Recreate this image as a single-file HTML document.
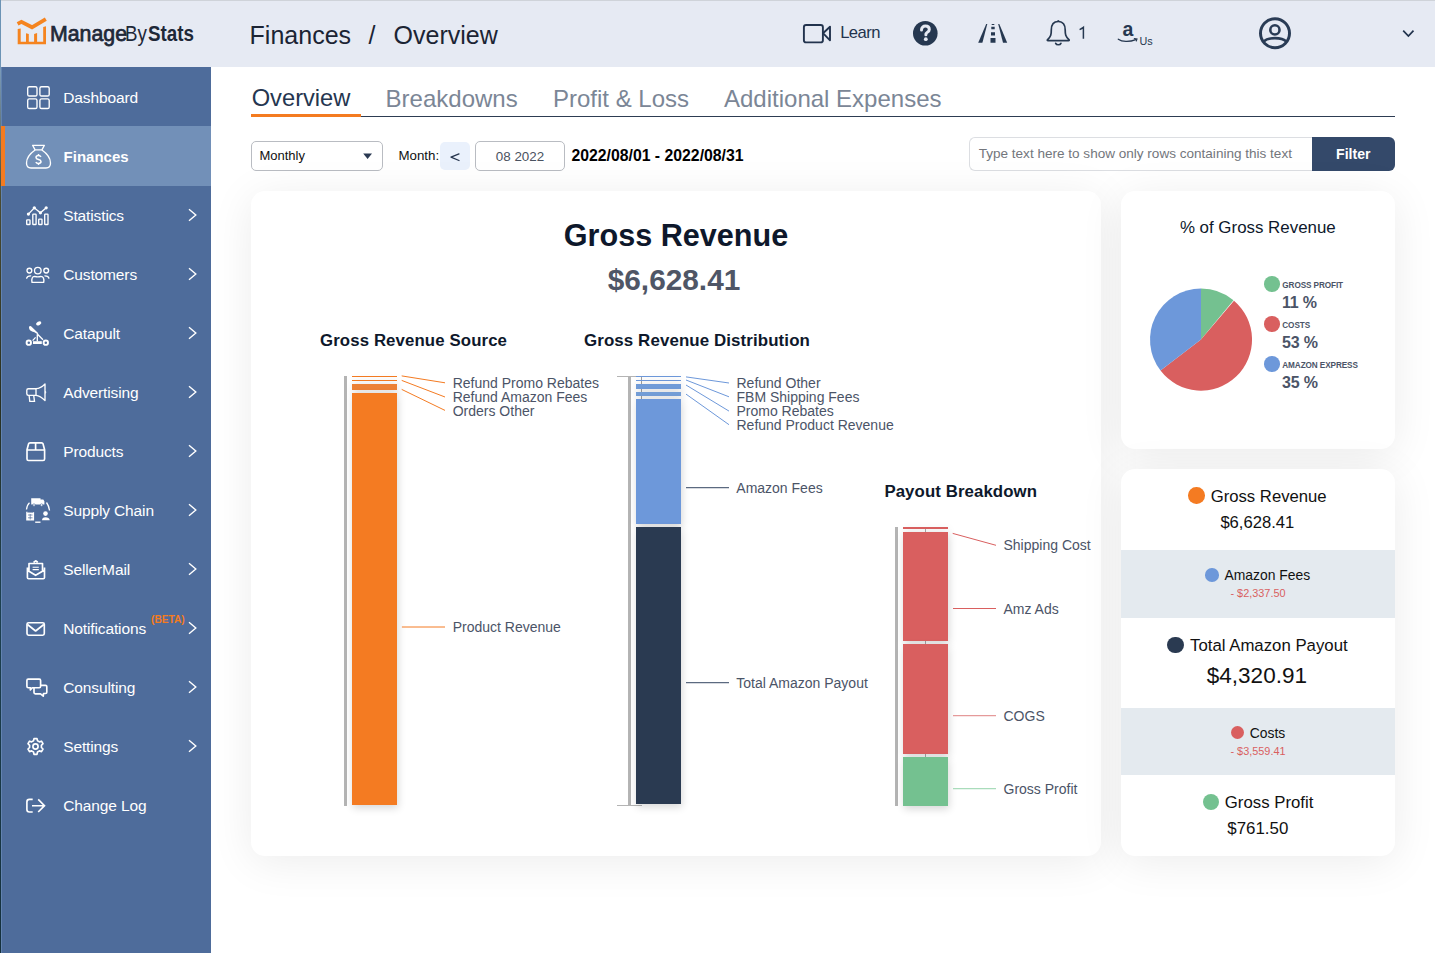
<!DOCTYPE html>
<html><head><meta charset="utf-8"><style>
*{box-sizing:border-box;margin:0;padding:0}
html,body{width:1435px;height:953px;overflow:hidden;background:#fff;font-family:"Liberation Sans",sans-serif;position:relative}
.t{position:absolute;white-space:nowrap}
.abs{position:absolute}
.card{position:absolute;background:#fff;border-radius:14px;box-shadow:0 6px 44px rgba(0,0,0,0.08)}
</style></head><body>
<div class="abs" style="left:0;top:0;width:1435px;height:67px;background:#e6eaf3;border-top:1px solid #cfd3d9"></div><div class="abs" style="left:0;top:0;width:1px;height:953px;background:linear-gradient(#6b93b5 0,#6b93b5 60px,#7a9ab8 70px,#4a4a30 200px,#2a3020 400px,#1d4050 600px,#15303c 953px);z-index:9"></div><div class="abs" style="left:1px;top:67px;width:1px;height:886px;background:#6283b0;z-index:9"></div><svg class="abs" style="left:12px;top:14px" width="40" height="36" viewBox="0 0 40 36">
<polyline points="5.6,9.9 9.4,7.9 20,13.3 33.8,5.2" fill="none" stroke="#f5841f" stroke-width="3.8" stroke-linejoin="miter"/>
<path d="M5.7 15 L8.7 14.4 V27.8 H14 V19.3 L16.8 19.9 V27.8 H22.1 V19.9 L25.1 19.1 V27.8 H31.2 V13 L34 12.3 V30.2 H5.7 Z" fill="#f5841f"/>
</svg><div class="t" style="left:50.3px;top:22.5px;font-size:22.5px;line-height:22.5px;color:#1e2838;transform-origin:0 0;transform:scale(0.947,1);-webkit-text-stroke:0.75px #1e2838">Manage</div><div class="t" style="left:125.2px;top:22.5px;font-size:22.5px;line-height:22.5px;color:#1e2838;transform-origin:0 0;transform:scale(0.834,1)">By</div><div class="t" style="left:147.8px;top:22.5px;font-size:22.5px;line-height:22.5px;color:#1e2838;transform-origin:0 0;transform:scale(0.835,1);font-weight:700">Stats</div><div class="t" style="top:22.64px;font-size:25px;line-height:25px;color:#1b2434;left:249.60px;">Finances</div>
<div class="t" style="top:22.64px;font-size:25px;line-height:25px;color:#1b2434;left:368.50px;">/</div>
<div class="t" style="top:22.64px;font-size:25px;line-height:25px;color:#1b2434;left:393.60px;">Overview</div>
<svg class="abs" style="left:795px;top:13px" width="100" height="40" viewBox="0 0 100 40">
<rect x="8.9" y="12" width="19" height="17.4" rx="2.2" fill="none" stroke="#22334d" stroke-width="1.9"/>
<path d="M28 20.2 L35 13.7 V27.3 Z" fill="none" stroke="#22334d" stroke-width="1.9" stroke-linejoin="round"/>
</svg><div class="t" style="top:24.85px;font-size:16.6px;line-height:16.6px;color:#22334d;letter-spacing:-0.55px;left:840.20px;">Learn</div>
<svg class="abs" style="left:900px;top:13px" width="40" height="40" viewBox="0 0 40 40">
<circle cx="25.3" cy="20.3" r="12.3" fill="#263850"/>
<path d="M21.5 17 C21.5 14.3 23.3 13.1 25.4 13.1 C27.7 13.1 29.3 14.4 29.3 16.4 C29.3 18.7 26.6 19.1 26 20.8 L25.9 21.8" fill="none" stroke="#e6eaf3" stroke-width="3" stroke-linecap="round"/>
<circle cx="25.8" cy="26.2" r="1.9" fill="#e6eaf3"/>
</svg><svg class="abs" style="left:970px;top:13px" width="45" height="40" viewBox="0 0 45 40">
<path d="M16.2 10.9 L17.3 10.9 L12.4 29.7 L8.2 29.7 Z" fill="#263850"/>
<path d="M28.2 10.9 L29.3 10.9 L37.2 29.7 L33 29.7 Z" fill="#263850"/>
<path d="M21.7 10.9 H24.3 V12.1 H21.7 Z M21.3 13.8 H24.7 V16.3 H21.3 Z M21 19.2 H25 V22.6 H21 Z M20.5 25 H25.5 V29.7 H20.5 Z" fill="#263850"/>
</svg><svg class="abs" style="left:1035px;top:13px" width="40" height="40" viewBox="0 0 40 40">
<path d="M23.3 8.5 C18.3 8.5 16.3 12.5 16.3 17 C16.3 21.5 16 23.5 12.6 26.6 C12 27.2 12.3 27.6 13 27.6 H33.5 C34.2 27.6 34.5 27.2 33.9 26.6 C30.5 23.5 30.2 21.5 30.2 17 C30.2 12.5 28.3 8.5 23.3 8.5 Z" fill="none" stroke="#263850" stroke-width="1.7" stroke-linejoin="round"/>
<path d="M23.3 7.2 V8.5" stroke="#263850" stroke-width="1.7"/>
<path d="M20.7 30.3 C21.5 32.2 25.1 32.2 25.9 30.3" fill="none" stroke="#263850" stroke-width="1.7" stroke-linecap="round"/>
</svg><svg class="abs" style="left:1070px;top:20px" width="20" height="25"><path d="M9.6 9.6 C11 9 12.4 8.2 13.4 7.4 V18.8" fill="none" stroke="#263850" stroke-width="1.5"/></svg><div class="t" style="top:19.79px;font-size:19.5px;line-height:19.5px;color:#263850;font-weight:700;left:1122.40px;">a</div>
<svg class="abs" style="left:1110px;top:30px" width="40" height="16" viewBox="0 0 40 16">
<path d="M8.3 9.2 C12 11.8 19 12.3 25.8 9.6" fill="none" stroke="#263850" stroke-width="1.3" stroke-linecap="round"/>
<path d="M24.3 8.6 L27 9 L26.3 11" fill="none" stroke="#263850" stroke-width="1.1" stroke-linecap="round"/>
</svg><div class="t" style="top:35.56px;font-size:10.8px;line-height:10.8px;color:#263850;left:1139.40px;">Us</div>
<svg class="abs" style="left:1250px;top:10px" width="50" height="48" viewBox="0 0 50 48">
<circle cx="25" cy="23.3" r="14.5" fill="none" stroke="#2a3c55" stroke-width="3"/>
<circle cx="24.9" cy="19.9" r="4.6" fill="none" stroke="#2a3c55" stroke-width="2.6"/>
<path d="M13.2 31.8 C16 29 20 28.1 24.9 28.1 C29.8 28.1 33.8 29 36.6 31.8" fill="none" stroke="#2a3c55" stroke-width="2.6"/>
</svg><svg class="abs" style="left:1395px;top:20px" width="30" height="28" viewBox="0 0 30 28">
<polyline points="8.2,10.6 13.4,16 18.5,10.6" fill="none" stroke="#22334d" stroke-width="1.7"/>
</svg><div class="abs" style="left:0;top:67px;width:211px;height:886px;background:#4e6c9b"></div><div class="abs" style="left:0;top:126px;width:211px;height:60px;background:#7290b8"></div><div class="abs" style="left:1px;top:126px;width:4px;height:60px;background:#f47b20;z-index:10"></div><div class="t" style="top:90.18px;font-size:15.5px;line-height:15.5px;color:#fff;letter-spacing:-0.12px;left:63.20px;">Dashboard</div>
<svg class="abs" style="left:20px;top:80px" width="40" height="40" viewBox="0 0 40 40"><rect x="7.7" y="6.7" width="9.3" height="9.3" rx="1.6" fill="none" stroke="#ffffff" stroke-width="1.35"/><rect x="19.9" y="6.7" width="9.3" height="9.3" rx="1.6" fill="none" stroke="#ffffff" stroke-width="1.35"/><rect x="7.7" y="18.9" width="9.3" height="9.6" rx="1.6" fill="none" stroke="#ffffff" stroke-width="1.35"/><rect x="19.9" y="18.9" width="9.3" height="9.6" rx="1.6" fill="none" stroke="#ffffff" stroke-width="1.35"/></svg><div class="t" style="top:149.00px;font-size:15px;line-height:15px;color:#fff;font-weight:700;left:63.60px;">Finances</div>
<svg class="abs" style="left:20px;top:136px" width="40" height="40" viewBox="0 0 40 40"><path d="M12.6 9.3 H24.4 L21.9 13.9 H15.1 Z" fill="none" stroke="#ffffff" stroke-width="1.35" stroke-linejoin="round"/><path d="M15.1 14 C10 17.5 6.5 22 6.5 27 C6.5 30.5 8.5 32 11 32 H26 C28.5 32 30.5 30.5 30.5 27 C30.5 22 27 17.5 21.9 14" fill="none" stroke="#ffffff" stroke-width="1.35"/><path d="M21 20.8 C20.5 20 19.6 19.6 18.5 19.6 C17 19.6 16 20.4 16 21.5 C16 22.7 17 23.1 18.5 23.5 C20 23.9 21 24.4 21 25.6 C21 26.8 19.9 27.5 18.5 27.5 C17.3 27.5 16.3 27 15.8 26.2 M18.5 18 V19.6 M18.5 27.5 V29" fill="none" stroke="#ffffff" stroke-width="1.5"/></svg><div class="t" style="top:208.18px;font-size:15.5px;line-height:15.5px;color:#fff;letter-spacing:-0.12px;left:63.20px;">Statistics</div>
<svg class="abs" style="left:20px;top:195px" width="40" height="40" viewBox="0 0 40 40"><polyline points="8.4,19.1 14.3,12.8 20.4,17.8 26.2,12.8" fill="none" stroke="#ffffff" stroke-width="1.35"/><circle cx="8.4" cy="19.1" r="1.6" fill="#ffffff"/><circle cx="14.3" cy="12.8" r="1.6" fill="#ffffff"/><circle cx="20.4" cy="17.8" r="1.6" fill="#ffffff"/><circle cx="26.2" cy="12.8" r="1.6" fill="#ffffff"/><rect x="6.7" y="24.9" width="3.3" height="4.6" rx="0.6" fill="none" stroke="#ffffff" stroke-width="1.35"/><rect x="12.8" y="19.1" width="3.3" height="10.4" rx="0.6" fill="none" stroke="#ffffff" stroke-width="1.35"/><rect x="18.7" y="24.1" width="3.3" height="5.4" rx="0.6" fill="none" stroke="#ffffff" stroke-width="1.35"/><rect x="24.7" y="19.1" width="3.3" height="10.4" rx="0.6" fill="none" stroke="#ffffff" stroke-width="1.35"/></svg><svg class="abs" style="left:180px;top:205px" width="24" height="20" viewBox="0 0 24 20"><polyline points="9,4.3 15.8,10 9,15.7" fill="none" stroke="#fff" stroke-width="1.4"/></svg><div class="t" style="top:267.18px;font-size:15.5px;line-height:15.5px;color:#fff;letter-spacing:-0.12px;left:63.20px;">Customers</div>
<svg class="abs" style="left:20px;top:254px" width="40" height="40" viewBox="0 0 40 40"><circle cx="9.4" cy="16.6" r="2.4" fill="none" stroke="#ffffff" stroke-width="1.35"/><circle cx="17.8" cy="16.6" r="3.3" fill="none" stroke="#ffffff" stroke-width="1.35"/><circle cx="26.2" cy="16.6" r="2.4" fill="none" stroke="#ffffff" stroke-width="1.35"/><path d="M12 28.3 C11.3 24.5 12.5 22.4 14.5 22.4 C16.5 23 19 23 21 22.4 C23 22.4 24.4 24.5 23.7 28.3 Z" fill="none" stroke="#ffffff" stroke-width="1.35" stroke-linejoin="round"/><path d="M6.7 24.2 C7 22.5 8.5 21.8 10.7 21.8" fill="none" stroke="#ffffff" stroke-width="1.35" stroke-linecap="round"/><path d="M28.9 24.2 C28.6 22.5 27.1 21.8 24.9 21.8" fill="none" stroke="#ffffff" stroke-width="1.35" stroke-linecap="round"/></svg><svg class="abs" style="left:180px;top:264px" width="24" height="20" viewBox="0 0 24 20"><polyline points="9,4.3 15.8,10 9,15.7" fill="none" stroke="#fff" stroke-width="1.4"/></svg><div class="t" style="top:326.18px;font-size:15.5px;line-height:15.5px;color:#fff;letter-spacing:-0.12px;left:63.20px;">Catapult</div>
<svg class="abs" style="left:20px;top:313px" width="40" height="40" viewBox="0 0 40 40"><circle cx="8.8" cy="29.7" r="2.2" fill="none" stroke="#ffffff" stroke-width="1.9"/><circle cx="25.8" cy="29.7" r="2.2" fill="none" stroke="#ffffff" stroke-width="1.9"/><rect x="13" y="28.2" width="8.8" height="2.8" fill="#ffffff"/><path d="M17.3 28.2 V21.2 M17.3 21 L23 26.8 M12.6 27.6 L15.6 24.4" stroke="#ffffff" stroke-width="1.35"/><path d="M9 13.6 C8.7 16.5 10.5 18.6 14 19 L17.6 21.2 L18.3 20.2 L10.8 13 Z" fill="#ffffff"/><ellipse cx="18.7" cy="10.4" rx="2.8" ry="1.8" transform="rotate(-30 18.7 10.4)" fill="#ffffff"/></svg><svg class="abs" style="left:180px;top:323px" width="24" height="20" viewBox="0 0 24 20"><polyline points="9,4.3 15.8,10 9,15.7" fill="none" stroke="#fff" stroke-width="1.4"/></svg><div class="t" style="top:385.18px;font-size:15.5px;line-height:15.5px;color:#fff;letter-spacing:-0.12px;left:63.20px;">Advertising</div>
<svg class="abs" style="left:20px;top:372px" width="40" height="40" viewBox="0 0 40 40"><path d="M16 16.7 H8.4 C7.3 16.7 6.8 17.3 6.8 18.3 V21.8 C6.8 22.8 7.3 23.3 8.4 23.3 H16 Z" fill="none" stroke="#ffffff" stroke-width="1.35"/><path d="M16 16.7 C19.5 16.5 22.5 14.5 25 12 V28.6 C22.5 26 19.5 23.6 16 23.3" fill="none" stroke="#ffffff" stroke-width="1.35" stroke-linejoin="round"/><path d="M9.1 23.5 L9.8 29.4 H14.5 L13.8 24" fill="none" stroke="#ffffff" stroke-width="1.35"/><path d="M25.2 18.8 C26.6 19.3 26.6 21.3 25.2 21.8" fill="#ffffff"/></svg><svg class="abs" style="left:180px;top:382px" width="24" height="20" viewBox="0 0 24 20"><polyline points="9,4.3 15.8,10 9,15.7" fill="none" stroke="#fff" stroke-width="1.4"/></svg><div class="t" style="top:444.18px;font-size:15.5px;line-height:15.5px;color:#fff;letter-spacing:-0.12px;left:63.20px;">Products</div>
<svg class="abs" style="left:20px;top:431px" width="40" height="40" viewBox="0 0 40 40"><path d="M7 18.7 V28 C7 29 7.6 29.5 8.5 29.5 H23.1 C24 29.5 24.6 29 24.6 28 V18.7 L23 12.7 C22.8 12 22.3 11.8 21.6 11.8 H10 C9.3 11.8 8.8 12 8.6 12.7 Z M7 19 H24.6 M15.6 12 V18.5" fill="none" stroke="#ffffff" stroke-width="1.65" stroke-linejoin="round"/></svg><svg class="abs" style="left:180px;top:441px" width="24" height="20" viewBox="0 0 24 20"><polyline points="9,4.3 15.8,10 9,15.7" fill="none" stroke="#fff" stroke-width="1.4"/></svg><div class="t" style="top:503.18px;font-size:15.5px;line-height:15.5px;color:#fff;letter-spacing:-0.12px;left:63.20px;">Supply Chain</div>
<svg class="abs" style="left:20px;top:490px" width="40" height="40" viewBox="0 0 40 40"><path d="M11.2 8.2 H20.5 V14.6 H11.2 Z M20.5 9.5 H23.3 L24.4 11.3 V14.6 H20.5 Z" fill="#ffffff"/><circle cx="14" cy="15" r="1.2" fill="#ffffff" stroke="#4e6c9b" stroke-width="0.6"/><circle cx="21.6" cy="15" r="1.2" fill="#ffffff" stroke="#4e6c9b" stroke-width="0.6"/><path d="M6.5 19.5 C7 16.3 8 14 9.5 12.8" fill="none" stroke="#ffffff" stroke-width="1.35"/><path d="M29.5 20.5 C29 17 28 14.5 26.5 12.5" fill="none" stroke="#ffffff" stroke-width="1.35"/><path d="M15.2 32.2 H20.5" stroke="#ffffff" stroke-width="1.35"/><path d="M6.2 21.7 H7.6 V23.1 L9.5 22 V23.2 L11.4 22 V23 L14.1 22 V30.4 H6.2 Z" fill="#ffffff"/><circle cx="25.5" cy="23.6" r="2.3" fill="#ffffff"/><path d="M22 30.3 C22 28 23.3 27.2 25.5 27.2 C27.7 27.2 29.7 28 29.7 30.3 Z" fill="#ffffff"/><path d="M8 25 H12.5 M8 27.8 H12.5 M10.2 24 V29.5" stroke="#4e6c9b" stroke-width="0.7"/></svg><svg class="abs" style="left:180px;top:500px" width="24" height="20" viewBox="0 0 24 20"><polyline points="9,4.3 15.8,10 9,15.7" fill="none" stroke="#fff" stroke-width="1.4"/></svg><div class="t" style="top:562.18px;font-size:15.5px;line-height:15.5px;color:#fff;letter-spacing:-0.12px;left:63.20px;">SellerMail</div>
<svg class="abs" style="left:20px;top:549px" width="40" height="40" viewBox="0 0 40 40"><path d="M7.4 18.6 V28.5 C7.4 29.3 7.8 29.7 8.6 29.7 H23.3 C24.1 29.7 24.5 29.3 24.5 28.5 V18.6 M7.7 21.5 L15.6 26.3 L23.8 21.5 M9 21.5 V14.5 H22.5 V21.5 M13.5 13.3 L15.6 11.8 L17.8 13.3" fill="none" stroke="#ffffff" stroke-width="1.65" stroke-linejoin="round"/><path d="M12.6 18.2 H18.8 M12.6 20.6 H18.8" stroke="#ffffff" stroke-width="1.1"/></svg><svg class="abs" style="left:180px;top:559px" width="24" height="20" viewBox="0 0 24 20"><polyline points="9,4.3 15.8,10 9,15.7" fill="none" stroke="#fff" stroke-width="1.4"/></svg><div class="t" style="top:621.18px;font-size:15.5px;line-height:15.5px;color:#fff;letter-spacing:-0.12px;left:63.20px;">Notifications</div>
<svg class="abs" style="left:20px;top:608px" width="40" height="40" viewBox="0 0 40 40"><rect x="7" y="14.7" width="17.3" height="12.5" rx="1.6" fill="none" stroke="#ffffff" stroke-width="1.65"/><polyline points="7.5,16.5 15.6,23 23.8,16.5" fill="none" stroke="#ffffff" stroke-width="1.65" stroke-linejoin="round"/></svg><svg class="abs" style="left:180px;top:618px" width="24" height="20" viewBox="0 0 24 20"><polyline points="9,4.3 15.8,10 9,15.7" fill="none" stroke="#fff" stroke-width="1.4"/></svg><div class="t" style="top:680.18px;font-size:15.5px;line-height:15.5px;color:#fff;letter-spacing:-0.12px;left:63.20px;">Consulting</div>
<svg class="abs" style="left:20px;top:667px" width="40" height="40" viewBox="0 0 40 40"><path d="M8.2 12.1 H19.3 C20.2 12.1 20.6 12.6 20.6 13.5 V19.3 C20.6 20.2 20.2 20.7 19.3 20.7 H12.3 L10.3 22.9 L10.5 20.7 H8.2 C7.3 20.7 6.9 20.2 6.9 19.3 V13.5 C6.9 12.6 7.3 12.1 8.2 12.1 Z" fill="none" stroke="#ffffff" stroke-width="1.65" stroke-linejoin="round"/><path d="M20.8 18.3 H25.5 C26.3 18.3 26.8 18.8 26.8 19.6 V25.2 C26.8 26 26.3 26.5 25.5 26.5 H23.5 L23.3 29.1 L20.5 26.8 H15.3 C14.5 26.8 14 26.3 14 25.5 V21" fill="none" stroke="#ffffff" stroke-width="1.65" stroke-linejoin="round"/></svg><svg class="abs" style="left:180px;top:677px" width="24" height="20" viewBox="0 0 24 20"><polyline points="9,4.3 15.8,10 9,15.7" fill="none" stroke="#fff" stroke-width="1.4"/></svg><div class="t" style="top:739.18px;font-size:15.5px;line-height:15.5px;color:#fff;letter-spacing:-0.12px;left:63.20px;">Settings</div>
<svg class="abs" style="left:20px;top:726px" width="40" height="40" viewBox="0 0 40 40"><path d="M14 12.6 H17 L17.5 14.8 L19.4 15.9 L21.5 15.2 L23 17.7 L21.4 19.3 V21.5 L23 23 L21.5 25.6 L19.4 24.9 L17.5 26 L17 28.3 H14 L13.5 26 L11.6 24.9 L9.5 25.6 L8 23 L9.6 21.5 V19.3 L8 17.7 L9.5 15.2 L11.6 15.9 L13.5 14.8 Z" fill="none" stroke="#ffffff" stroke-width="1.65" stroke-linejoin="round"/><circle cx="15.5" cy="20.5" r="2.6" fill="none" stroke="#ffffff" stroke-width="1.65"/></svg><svg class="abs" style="left:180px;top:736px" width="24" height="20" viewBox="0 0 24 20"><polyline points="9,4.3 15.8,10 9,15.7" fill="none" stroke="#fff" stroke-width="1.4"/></svg><div class="t" style="top:798.18px;font-size:15.5px;line-height:15.5px;color:#fff;letter-spacing:-0.12px;left:63.20px;">Change Log</div>
<svg class="abs" style="left:20px;top:785px" width="40" height="40" viewBox="0 0 40 40"><path d="M12.7 14.4 H9.4 C7.8 14.4 6.9 15.3 6.9 16.9 V24.5 C6.9 26.1 7.8 27 9.4 27 H12.7" fill="none" stroke="#ffffff" stroke-width="1.65"/><path d="M12 20.7 H24.5 M18.2 14.4 L24.5 20.7 L18.2 27" fill="none" stroke="#ffffff" stroke-width="1.65"/></svg><div class="t" style="top:614.77px;font-size:10.2px;line-height:10.2px;color:#f47b20;font-weight:700;left:151.00px;">(BETA)</div>

<div class="t" style="top:87.04px;font-size:23.7px;line-height:23.7px;color:#253650;left:251.70px;">Overview</div>
<div class="t" style="top:86.78px;font-size:24px;line-height:24px;color:#7b8696;left:385.60px;">Breakdowns</div>
<div class="t" style="top:86.78px;font-size:24px;line-height:24px;color:#7b8696;left:553.00px;">Profit &amp; Loss</div>
<div class="t" style="top:86.78px;font-size:24px;line-height:24px;color:#7b8696;left:724.00px;">Additional Expenses</div>
<div class="abs" style="left:251px;top:116px;width:1144px;height:1px;background:#2d3c52"></div><div class="abs" style="left:251px;top:114px;width:110px;height:3px;background:#f47b20"></div><div class="abs" style="left:251px;top:141px;width:132px;height:30px;border:1px solid #b9bcc2;border-radius:5px;background:#fff"></div><div class="t" style="top:148.90px;font-size:13px;line-height:13px;color:#111;left:259.40px;">Monthly</div>
<svg class="abs" style="left:360px;top:150px" width="16" height="12" viewBox="0 0 16 12"><path d="M3.2 3.6 H12 L7.6 9 Z" fill="#2a3a52"/></svg><div class="t" style="top:148.64px;font-size:13.3px;line-height:13.3px;color:#111;left:398.50px;">Month:</div>
<div class="abs" style="left:440px;top:142px;width:30px;height:28px;border-radius:5px;background:#eaf1fc"></div><svg class="abs" style="left:440px;top:142px" width="30" height="28"><polyline points="19,11.9 11,15.1 19,18.5" fill="none" stroke="#25344d" stroke-width="1.3" stroke-linecap="round" stroke-linejoin="round"/></svg><div class="abs" style="left:475px;top:141px;width:90px;height:30px;border:1px solid #b9bcc2;border-radius:5px;background:#fff"></div><div class="t" style="top:149.66px;font-size:13.4px;line-height:13.4px;color:#4a5260;left:20.00px;width:1000px;text-align:center;">08 2022</div>
<div class="t" style="top:147.63px;font-size:15.8px;line-height:15.8px;color:#000;font-weight:700;left:571.40px;">2022/08/01 - 2022/08/31</div>
<div class="abs" style="left:969px;top:137px;width:345px;height:34px;border:1px solid #dcdee2;border-right:none;border-radius:6px 0 0 6px;background:#fff"></div><div class="t" style="top:147.13px;font-size:13.55px;line-height:13.55px;color:#73767c;left:978.70px;">Type text here to show only rows containing this text</div>
<div class="abs" style="left:1312px;top:137px;width:83px;height:34px;border-radius:0 6px 6px 0;background:#34496a"></div><div class="t" style="top:147.46px;font-size:14.1px;line-height:14.1px;color:#fff;font-weight:700;left:853.30px;width:1000px;text-align:center;">Filter</div>
<div class="card" style="left:251px;top:191px;width:850px;height:665px"></div><div class="card" style="left:1121px;top:191px;width:274px;height:258px"></div><div class="card" style="left:1121px;top:469px;width:274px;height:387px;overflow:hidden"><div class="abs" style="left:0;top:81px;width:274px;height:68px;background:#e4eaef"></div><div class="abs" style="left:0;top:239px;width:274px;height:67px;background:#e4eaef"></div></div><div class="t" style="top:220.00px;font-size:30.6px;line-height:30.6px;color:#0e182b;font-weight:700;left:176.00px;width:1000px;text-align:center;">Gross Revenue</div>
<div class="t" style="top:265.37px;font-size:29.8px;line-height:29.8px;color:#4f5666;font-weight:700;left:174.00px;width:1000px;text-align:center;">$6,628.41</div>
<div class="t" style="top:332.98px;font-size:16.8px;line-height:16.8px;color:#0e182b;font-weight:700;letter-spacing:0.12px;left:320.00px;">Gross Revenue Source</div>
<div class="t" style="top:332.89px;font-size:16.9px;line-height:16.9px;color:#0e182b;font-weight:700;letter-spacing:0.1px;left:584.00px;">Gross Revenue Distribution</div>
<div class="t" style="top:484.18px;font-size:16.8px;line-height:16.8px;color:#0e182b;font-weight:700;letter-spacing:0.1px;left:884.40px;">Payout Breakdown</div>
<div class="abs" style="left:344px;top:376px;width:3px;height:430px;background:#b4b4b4"></div><div class="abs" style="left:352px;top:376px;width:45px;height:1px;background:#f47b22;box-shadow:1px 3px 8px rgba(0,0,0,0.16);"></div><div class="abs" style="left:352px;top:380px;width:45px;height:1px;background:#f47b22;box-shadow:1px 3px 8px rgba(0,0,0,0.16);"></div><div class="abs" style="left:352px;top:384px;width:45px;height:6px;background:#ec8136;box-shadow:1px 3px 8px rgba(0,0,0,0.16);"></div><div class="abs" style="left:352px;top:393px;width:45px;height:412px;background:#f47b22;box-shadow:1px 3px 8px rgba(0,0,0,0.16);"></div><div class="abs" style="left:628px;top:376px;width:3px;height:430px;background:#b4b4b4"></div><div class="abs" style="left:617px;top:376px;width:25px;height:1px;background:#b4b4b4"></div><div class="abs" style="left:617px;top:805px;width:25px;height:1px;background:#b4b4b4"></div><div class="abs" style="left:641px;top:377px;width:1px;height:22px;background:#a0a0a0"></div><div class="abs" style="left:636px;top:376px;width:45px;height:1px;background:#6d98da;box-shadow:1px 3px 8px rgba(0,0,0,0.16);"></div><div class="abs" style="left:636px;top:380px;width:45px;height:1px;background:#6d98da;box-shadow:1px 3px 8px rgba(0,0,0,0.16);"></div><div class="abs" style="left:636px;top:384px;width:45px;height:5px;background:#709bd8;box-shadow:1px 3px 8px rgba(0,0,0,0.16);"></div><div class="abs" style="left:636px;top:392px;width:45px;height:4px;background:#739dd6;box-shadow:1px 3px 8px rgba(0,0,0,0.16);"></div><div class="abs" style="left:636px;top:399px;width:45px;height:125px;background:#6d98da;box-shadow:1px 3px 8px rgba(0,0,0,0.16);"></div><div class="abs" style="left:636px;top:527px;width:45px;height:277px;background:#2a3a51;box-shadow:1px 3px 8px rgba(0,0,0,0.16);"></div><div class="abs" style="left:895px;top:527px;width:3px;height:279px;background:#b4b4b4"></div><div class="abs" style="left:925px;top:528px;width:1px;height:230px;background:#ababab"></div><div class="abs" style="left:903px;top:527px;width:45px;height:2px;background:#d95f5f;box-shadow:1px 3px 8px rgba(0,0,0,0.16);"></div><div class="abs" style="left:903px;top:532px;width:45px;height:109px;background:#d95f5f;box-shadow:1px 3px 8px rgba(0,0,0,0.16);"></div><div class="abs" style="left:903px;top:644px;width:45px;height:110px;background:#d95f5f;box-shadow:1px 3px 8px rgba(0,0,0,0.16);"></div><div class="abs" style="left:903px;top:757px;width:45px;height:49px;background:#74c190;box-shadow:1px 3px 8px rgba(0,0,0,0.16);"></div><svg class="abs" style="left:0;top:0" width="1435" height="953"><path d="M401.7 375.9 L445 382.8 M401.7 380.4 L445 397 M401.7 389.4 L445 410.4 M401.9 627 H445" stroke="#f47b22" stroke-width="1" fill="none"/><path d="M686 376.9 L729 383 M686 380 L729 396.8 M686 385 L729 411.1 M686 394.1 L729 424.7" stroke="#6d98da" stroke-width="1" fill="none"/><path d="M686 487.6 H729 M686 682.6 H729" stroke="#5b6a80" stroke-width="1.2" fill="none"/><path d="M952.7 533.4 L996 545.3 M953 608.5 H996" stroke="#d95f5f" stroke-width="1" fill="none"/><path d="M953 715.7 H996" stroke="#e59a9a" stroke-width="1.2" fill="none"/><path d="M953 788.7 H996" stroke="#a9dcbb" stroke-width="1.2" fill="none"/></svg><div class="t" style="top:375.75px;font-size:14px;line-height:14px;color:#4b5467;left:452.70px;">Refund Promo Rebates</div>
<div class="t" style="top:389.75px;font-size:14px;line-height:14px;color:#4b5467;left:452.70px;">Refund Amazon Fees</div>
<div class="t" style="top:403.65px;font-size:14px;line-height:14px;color:#4b5467;left:452.70px;">Orders Other</div>
<div class="t" style="top:620.15px;font-size:14px;line-height:14px;color:#4b5467;left:452.70px;">Product Revenue</div>
<div class="t" style="top:375.75px;font-size:14px;line-height:14px;color:#4b5467;left:736.50px;">Refund Other</div>
<div class="t" style="top:389.65px;font-size:14px;line-height:14px;color:#4b5467;left:736.50px;">FBM Shipping Fees</div>
<div class="t" style="top:403.75px;font-size:14px;line-height:14px;color:#4b5467;left:736.50px;">Promo Rebates</div>
<div class="t" style="top:417.55px;font-size:14px;line-height:14px;color:#4b5467;left:736.50px;">Refund Product Revenue</div>
<div class="t" style="top:480.75px;font-size:14px;line-height:14px;color:#4b5467;left:736.30px;">Amazon Fees</div>
<div class="t" style="top:675.75px;font-size:14px;line-height:14px;color:#4b5467;left:736.30px;">Total Amazon Payout</div>
<div class="t" style="top:538.15px;font-size:14px;line-height:14px;color:#4b5467;left:1003.50px;">Shipping Cost</div>
<div class="t" style="top:601.65px;font-size:14px;line-height:14px;color:#4b5467;left:1003.50px;">Amz Ads</div>
<div class="t" style="top:708.85px;font-size:14px;line-height:14px;color:#4b5467;left:1003.50px;">COGS</div>
<div class="t" style="top:781.85px;font-size:14px;line-height:14px;color:#4b5467;left:1003.50px;">Gross Profit</div>
<div class="t" style="top:220.49px;font-size:16.9px;line-height:16.9px;color:#0e182b;left:757.80px;width:1000px;text-align:center;">% of Gross Revenue</div>
<svg class="abs" style="left:0;top:0" width="1435" height="953"><path d="M1201 339.6 L1201.00 288.60 A51 51 0 0 1 1233.51 300.30 Z" fill="#74c190"/><path d="M1201 339.6 L1234.00 300.72 A51 51 0 1 1 1160.51 370.60 Z" fill="#d95f5f"/><path d="M1201 339.6 L1160.51 370.60 A51 51 0 0 1 1201.00 288.60 Z" fill="#6d98da"/></svg><div class="abs" style="left:1264.0px;top:276.2px;width:15.6px;height:15.6px;border-radius:50%;background:#74c190"></div><div class="t" style="top:282.26px;font-size:8.2px;line-height:8.2px;color:#4b5467;font-weight:700;letter-spacing:-0.1px;left:1282.30px;">GROSS PROFIT</div>
<div class="t" style="top:294.76px;font-size:16px;line-height:16px;color:#4b5467;font-weight:700;letter-spacing:-0.2px;left:1282.00px;">11 %</div>
<div class="abs" style="left:1264.0px;top:316.2px;width:15.6px;height:15.6px;border-radius:50%;background:#d95f5f"></div><div class="t" style="top:322.26px;font-size:8.2px;line-height:8.2px;color:#4b5467;font-weight:700;letter-spacing:-0.1px;left:1282.30px;">COSTS</div>
<div class="t" style="top:334.76px;font-size:16px;line-height:16px;color:#4b5467;font-weight:700;letter-spacing:-0.2px;left:1282.00px;">53 %</div>
<div class="abs" style="left:1264.0px;top:356.2px;width:15.6px;height:15.6px;border-radius:50%;background:#6d98da"></div><div class="t" style="top:362.26px;font-size:8.2px;line-height:8.2px;color:#4b5467;font-weight:700;letter-spacing:-0.1px;left:1282.30px;">AMAZON EXPRESS</div>
<div class="t" style="top:374.76px;font-size:16px;line-height:16px;color:#4b5467;font-weight:700;letter-spacing:-0.2px;left:1282.00px;">35 %</div>
<div class="abs" style="left:1188.10px;top:487.40px;width:16.60px;height:16.60px;border-radius:50%;background:#f47b22"></div><div class="t" style="top:488.86px;font-size:16.7px;line-height:16.7px;color:#111;left:1210.70px;">Gross Revenue</div>
<div class="t" style="top:515.45px;font-size:16.6px;line-height:16.6px;color:#111;left:757.30px;width:1000px;text-align:center;">$6,628.41</div>
<div class="abs" style="left:1205.20px;top:568.00px;width:13.60px;height:13.60px;border-radius:50%;background:#6d98da"></div><div class="t" style="top:569.43px;font-size:13.9px;line-height:13.9px;color:#111;left:1224.50px;">Amazon Fees</div>
<div class="t" style="top:587.77px;font-size:10.9px;line-height:10.9px;color:#d95f5f;left:758.00px;width:1000px;text-align:center;">- $2,337.50</div>
<div class="abs" style="left:1167.40px;top:636.70px;width:16.60px;height:16.60px;border-radius:50%;background:#2a3a51"></div><div class="t" style="top:637.98px;font-size:16.8px;line-height:16.8px;color:#111;left:1190.00px;">Total Amazon Payout</div>
<div class="t" style="top:665.15px;font-size:22.5px;line-height:22.5px;color:#111;left:756.90px;width:1000px;text-align:center;">$4,320.91</div>
<div class="abs" style="left:1230.70px;top:725.80px;width:13.60px;height:13.60px;border-radius:50%;background:#d95f5f"></div><div class="t" style="top:727.23px;font-size:13.9px;line-height:13.9px;color:#111;left:1249.70px;">Costs</div>
<div class="t" style="top:745.77px;font-size:10.9px;line-height:10.9px;color:#d95f5f;left:758.00px;width:1000px;text-align:center;">- $3,559.41</div>
<div class="abs" style="left:1202.60px;top:793.50px;width:16.40px;height:16.40px;border-radius:50%;background:#74c190"></div><div class="t" style="top:794.78px;font-size:16.8px;line-height:16.8px;color:#111;left:1224.80px;">Gross Profit</div>
<div class="t" style="top:821.19px;font-size:16.9px;line-height:16.9px;color:#111;left:757.80px;width:1000px;text-align:center;">$761.50</div>

</body></html>
